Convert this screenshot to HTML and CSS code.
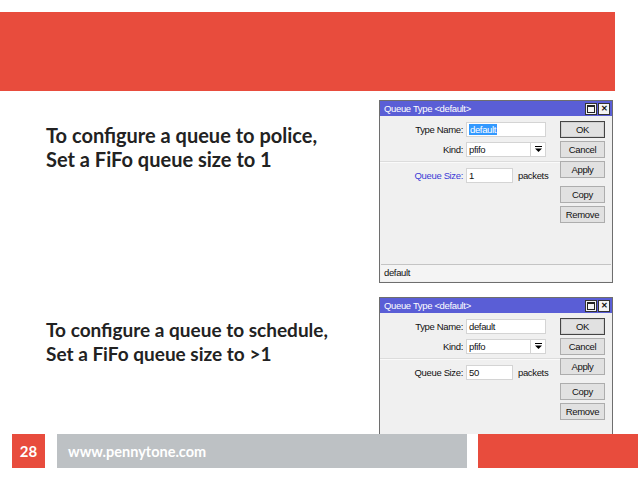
FILE: index.html
```html
<!DOCTYPE html>
<html>
<head>
<meta charset="utf-8">
<link rel="stylesheet" href="styles.css">
</head>
<body>
<div class="slide">
  <div class="banner"></div>

  <div class="row row1">
    <div class="text">
      <p>To configure a queue to police,</p>
      <p>Set a FiFo queue size to 1</p>
    </div>
    <div class="dlg d1">
      <div class="title">
        <span class="ttl">Queue Type &lt;default&gt;</span>
        <span class="tbtns"><i class="tb max"><b></b></i><i class="tb cls">✕</i></span>
      </div>
      <div class="body">
        <div class="form">
          <div class="frow"><span class="lbl">Type Name:</span><span class="inp w80"><span class="sel">default</span></span></div>
          <div class="frow"><span class="lbl">Kind:</span><span class="inp w80 drop"><span class="val">pfifo</span><span class="arr"><svg width="7" height="7" viewBox="0 0 7 7"><rect x="0" y="0" width="7" height="1" fill="#000"/><path d="M0 2.5h7L3.5 6z" fill="#000"/></svg></span></span></div>
          <div class="sep"></div>
          <div class="frow"><span class="lbl blue">Queue Size:</span><span class="inp w47">1</span><span class="unit">packets</span></div>
        </div>
        <div class="btns">
          <span class="btn def">OK</span>
          <span class="btn">Cancel</span>
          <span class="btn">Apply</span>
          <span class="btn gap">Copy</span>
          <span class="btn">Remove</span>
        </div>
      </div>
      <div class="status">default</div>
    </div>
  </div>

  <div class="row row2">
    <div class="text">
      <p>To configure a queue to schedule,</p>
      <p>Set a FiFo queue size to &gt;1</p>
    </div>
    <div class="dlg d2">
      <div class="title">
        <span class="ttl">Queue Type &lt;default&gt;</span>
        <span class="tbtns"><i class="tb max"><b></b></i><i class="tb cls">✕</i></span>
      </div>
      <div class="body">
        <div class="form">
          <div class="frow"><span class="lbl">Type Name:</span><span class="inp w80">default</span></div>
          <div class="frow"><span class="lbl">Kind:</span><span class="inp w80 drop"><span class="val">pfifo</span><span class="arr"><svg width="7" height="7" viewBox="0 0 7 7"><rect x="0" y="0" width="7" height="1" fill="#000"/><path d="M0 2.5h7L3.5 6z" fill="#000"/></svg></span></span></div>
          <div class="sep"></div>
          <div class="frow"><span class="lbl">Queue Size:</span><span class="inp w47">50</span><span class="unit">packets</span></div>
        </div>
        <div class="btns">
          <span class="btn def">OK</span>
          <span class="btn">Cancel</span>
          <span class="btn">Apply</span>
          <span class="btn gap">Copy</span>
          <span class="btn">Remove</span>
        </div>
      </div>
    </div>
  </div>

  <div class="footer">
    <div class="num">28</div>
    <div class="url">www.pennytone.com</div>
    <div class="redbar"></div>
  </div>
</div>
</body>
</html>
```

FILE: styles.css
```css
* { box-sizing: border-box; }
html, body { margin: 0; padding: 0; background: #fff; }
.slide {
  width: 638px;
  height: 479px;
  overflow: hidden;
  font-family: Lato, "Liberation Sans", sans-serif;
}
.banner {
  margin-top: 12px;
  width: 615px;
  height: 79px;
  background: #e84c3d;
}
.row {
  display: flex;
}
.row1 { margin-top: 9px; }
.row2 { margin-top: 14px; }
.text {
  flex: 1;
  padding-left: 46px;
  color: #222;
  font-weight: 700;
  font-size: 20px;
  line-height: 24px;
}
.row1 .text { padding-top: 23px; }
.row2 .text { padding-top: 21px; font-size: 19px; }
.text p { margin: 0; }

.dlg {
  width: 234px;
  margin-right: 25px;
  border: 1px solid #6e6e6e;
  background: #f0f0f0;
  display: flex;
  flex-direction: column;
  font-family: "Liberation Sans", Arial, sans-serif;
  font-size: 9.5px;
  letter-spacing: -0.35px;
  color: #111;
}
.d1 { height: 183px; }
.d2 { height: 137px; border-bottom: none; }
.title {
  height: 15px;
  background: #5a5ed6;
  color: #fff;
  display: flex;
  align-items: center;
  justify-content: space-between;
  padding: 0 2px 0 4px;
}
.ttl { line-height: 15px; }
.tbtns { display: flex; gap: 1px; }
.tb {
  width: 12px;
  height: 12px;
  background: #f4f4f4;
  border: 1px solid #333;
  display: flex;
  align-items: center;
  justify-content: center;
  font-style: normal;
  font-size: 8px;
  font-weight: 700;
  color: #111;
  line-height: 1;
  letter-spacing: 0;
}
.tb.max b {
  width: 8px;
  height: 8px;
  border: 1px solid #222;
  border-top-width: 2px;
}
.body {
  flex: 1;
  display: flex;
  padding-top: 5px;
}
.form {
  width: 180px;
  padding-top: 1px;
  display: flex;
  flex-direction: column;
}
.frow {
  display: flex;
  align-items: center;
  height: 15px;
  margin-bottom: 5px;
}
.lbl {
  width: 86px;
  text-align: right;
  padding-right: 3px;
}
.lbl.blue { color: #3b3bd6; }
.inp {
  height: 15px;
  background: #fff;
  border: 1px solid #d4d4d4;
  display: flex;
  align-items: center;
  padding-left: 2px;
}
.w80 { width: 80px; }
.w47 { width: 47px; }
.sel {
  background: #3399ff;
  color: #fff;
  padding: 0 1px;
  line-height: 11px;
}
.drop { justify-content: space-between; padding-right: 0; }
.arr {
  width: 15px;
  height: 13px;
  border-left: 1px solid #d4d4d4;
  display: flex;
  align-items: center;
  justify-content: center;
}
.unit { margin-left: 5px; }
.sep {
  height: 2px;
  margin: -1px 0 5px 0;
  border-top: 1px solid #dcdcdc;
  border-bottom: 1px solid #fafafa;
}
.btns {
  width: 45px;
  display: flex;
  flex-direction: column;
  gap: 3px;
}
.btn {
  height: 17px;
  background: #e1e1e1;
  border: 1px solid #adadad;
  display: flex;
  align-items: center;
  justify-content: center;
}
.btn.def { border: 1px solid #444; box-shadow: inset 0 0 0 1px #d0d0d0; }
.btn.gap { margin-top: 5px; }
.status {
  height: 17px;
  margin: 0 1px 1px 1px;
  border-top: 1px solid #c4c4c4;
  background: #f4f4f4;
  padding-left: 3px;
  line-height: 16px;
}

.footer {
  display: flex;
  height: 34px;
}
.num {
  margin-left: 12px;
  width: 33px;
  background: #e84c3d;
  color: #fff;
  font-weight: 700;
  font-size: 15px;
  display: flex;
  align-items: center;
  justify-content: center;
}
.url {
  margin-left: 12px;
  width: 410px;
  background: #bdc1c4;
  color: #fff;
  font-weight: 700;
  font-size: 14.5px;
  display: flex;
  align-items: center;
  padding-left: 11px;
}
.redbar {
  margin-left: 11px;
  flex: 1;
  background: #e84c3d;
}
```
